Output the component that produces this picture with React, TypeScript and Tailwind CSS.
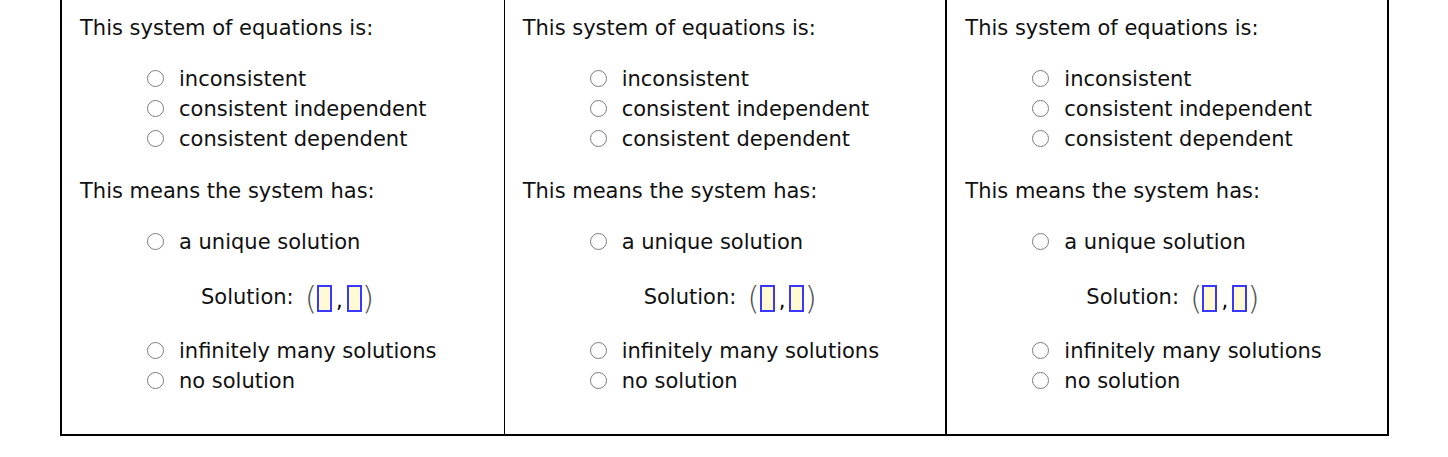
import React from "react";

const Radio = ({ label }: { label: string }) => (
  <div className="flex h-[30px] items-center">
    <span className="mb-[4px] ml-[67px] mr-[15px] block h-[17px] w-[17px] shrink-0 rounded-full border-[1.5px] border-[#7c7c7c] bg-white" />
    <span>{label}</span>
  </div>
);

const Box = () => (
  <span className="block h-[27px] w-[15px] shrink-0 border-2 border-[#3838ff] bg-[#fffad2]" />
);

const Cell = ({ divider }: { divider: string }) => (
  <div className={`${divider} pl-[18px] pt-[14px] pb-[37px]`}>
    <div className="flex h-[30px] items-center">This system of equations is:</div>
    <div className="mt-[21px]">
      <Radio label="inconsistent" />
      <Radio label="consistent independent" />
      <Radio label="consistent dependent" />
    </div>
    <div className="mt-[22px] flex h-[30px] items-center">This means the system has:</div>
    <div className="mt-[21px]">
      <Radio label="a unique solution" />
    </div>
    <div className="mt-[25px] flex h-[30px] items-center pl-[121px]">
      <span>Solution:</span>
      <span className="ml-[11px] flex items-center">
        <span className="text-[32px] font-light leading-none text-[#555]">(</span>
        <Box />
        <span className="mx-[4px] self-end pb-[2px] leading-none text-black">,</span>
        <Box />
        <span className="text-[32px] font-light leading-none text-[#555]">)</span>
      </span>
    </div>
    <div className="mt-[24px]">
      <Radio label="infinitely many solutions" />
      <Radio label="no solution" />
    </div>
  </div>
);

export default function App() {
  return (
    <div className="h-[457px] w-[1448px] bg-white text-[21px] text-[#111]" style={{ fontFamily: "'DejaVu Sans', Verdana, sans-serif" }}>
      <div className="ml-[60px] grid w-[1329px] grid-cols-3 border-x-2 border-b-2 border-black">
        <Cell divider="" />
        <Cell divider="border-l border-black" />
        <Cell divider="border-l-2 border-black" />
      </div>
    </div>
  );
}
